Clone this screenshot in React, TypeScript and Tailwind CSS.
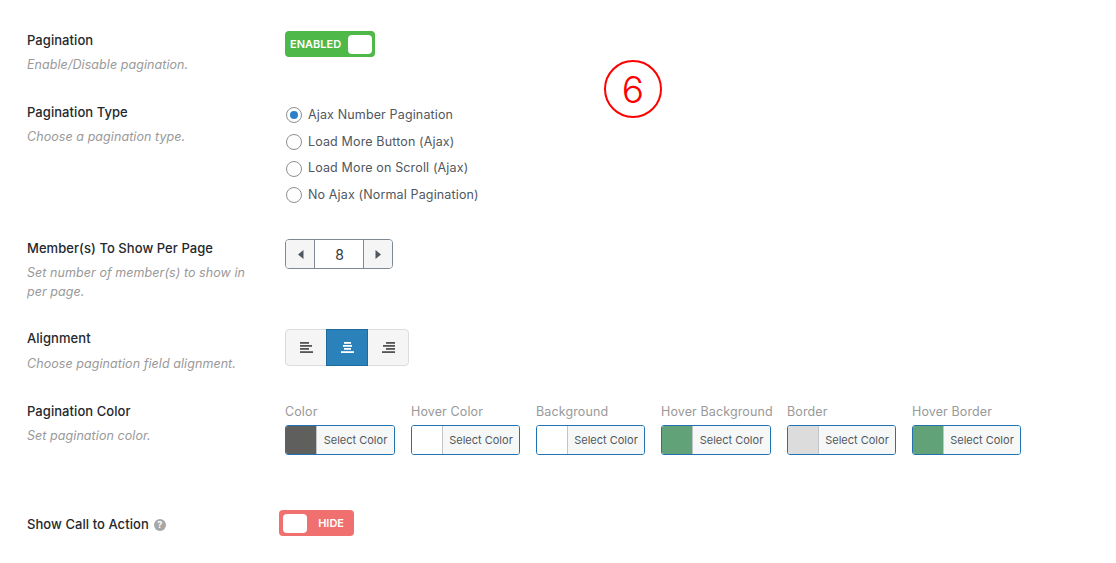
const SWATCHES = [
  { label: 'Color', color: 'bg-[#5f5f5d]', width: 'w-[110px]' },
  { label: 'Hover Color', color: 'bg-white', width: 'w-[109px]' },
  { label: 'Background', color: 'bg-white', width: 'w-[109px]' },
  { label: 'Hover Background', color: 'bg-[#61a279]', width: 'w-[110px]' },
  { label: 'Border', color: 'bg-[#dcdcdc]', width: 'w-[109px]' },
  { label: 'Hover Border', color: 'bg-[#61a279]', width: 'w-[109px]' },
]

const RADIOS = ['Ajax Number Pagination', 'Load More Button (Ajax)', 'Load More on Scroll (Ajax)', 'No Ajax (Normal Pagination)']

function Label({ title, desc, descGap = 'mt-[6px]' }: { title: string; desc?: string; descGap?: string }) {
  return (
    <div className="w-[258px] shrink-0 pr-[20px]">
      <div className="text-[13px] leading-[18px] font-medium tracking-[0.06px] text-[#23282d]">{title}</div>
      {desc && <p className={`${descGap} text-[12.5px] leading-[19px] italic tracking-[0.07px] text-[#999]`}>{desc}</p>}
    </div>
  )
}

function AlignIcon({ side, color }: { side: 'left' | 'center' | 'right'; color: string }) {
  const x = (w: number) => (side === 'left' ? 0 : side === 'right' ? 13 - w : (13 - w) / 2)
  const top = side === 'center' ? 7 : 9
  return (
    <svg width="13" height="11" viewBox="0 0 13 11" fill={color}>
      <rect x={x(top)} y="0" width={top} height="1.8" />
      <rect x={x(side === 'center' ? 9 : 12)} y="3" width={side === 'center' ? 9 : 12} height="1.8" />
      <rect x={x(side === 'center' ? 7 : 9)} y="6" width={side === 'center' ? 7 : 9} height="1.8" />
      <rect x={x(13)} y="9.2" width="13" height="1.8" />
    </svg>
  )
}

export default function App() {
  return (
    <div className="relative h-[563px] w-[1116px] overflow-hidden bg-white pl-[27px] pt-[31px] font-['Inter','Liberation_Sans',sans-serif]">
      {/* Section marker */}
      <div className="absolute left-[604px] top-[60px] flex h-[58px] w-[58px] items-center justify-center rounded-full border-2 border-[#ff0000] text-[37px] font-light leading-none text-[#ff0000]">
        6
      </div>

      <div className="flex h-[72px]">
        <Label title="Pagination" desc="Enable/Disable pagination." />
        <div className="flex h-[26px] w-[90px] items-center justify-between rounded-[4px] bg-[#4eb848] pl-[5px] pr-[3px]">
          <span className="pt-px text-[11px] font-semibold text-white">ENABLED</span>
          <span className="h-[19px] w-[24px] rounded-[4px] bg-white" />
        </div>
      </div>

      <div className="flex h-[136px]">
        <Label title="Pagination Type" desc="Choose a pagination type." />
        <div className="-mt-px flex flex-col">
          {RADIOS.map((r, i) => (
            <div key={r} className="flex h-[26.7px] items-center gap-[6px] pl-px text-[12.5px] tracking-[0.14px] text-[#50575e]">
              <span className="flex h-[16px] w-[16px] items-center justify-center rounded-full border border-[#8c8f94]">
                {i === 0 && <span className="h-[8px] w-[8px] rounded-full bg-[#2b7fc7]" />}
              </span>
              {r}
            </div>
          ))}
        </div>
      </div>

      <div className="flex h-[90px]">
        <Label title="Member(s) To Show Per Page" desc="Set number of member(s) to show in per page." />
        <div className="flex h-[30px] w-[108px] overflow-hidden rounded-[4px] border border-[#7e8993] text-[#32373c]">
          <span className="flex w-[29px] items-center justify-center border-r border-[#7e8993] bg-[#f5f5f5] pl-px">
            <svg width="6" height="9" viewBox="0 0 6 9" fill="#50575e"><path d="M5.5 0v9L0 4.5z" /></svg>
          </span>
          <span className="flex flex-1 items-center justify-center pl-px text-[14px]">8</span>
          <span className="flex w-[29px] items-center justify-center border-l border-[#7e8993] bg-[#f5f5f5]">
            <svg width="6" height="9" viewBox="0 0 6 9" fill="#50575e"><path d="M.5 0v9L6 4.5z" /></svg>
          </span>
        </div>
      </div>

      <div className="flex h-[73px]">
        <Label title="Alignment" desc="Choose pagination field alignment." descGap="mt-[7px]" />
        <div className="flex h-[37px] w-[124px] rounded-[4px] border border-[#dcdcde] bg-[#f5f5f5]">
          <span className="flex w-[40px] items-center justify-center">
            <AlignIcon side="left" color="#555" />
          </span>
          <span className="-my-px flex w-[42px] items-center justify-center border border-[#1f6a9c] bg-[#2b82ba]">
            <AlignIcon side="center" color="#fff" />
          </span>
          <span className="flex flex-1 items-center justify-center">
            <AlignIcon side="right" color="#555" />
          </span>
        </div>
      </div>

      <div className="flex h-[108px]">
        <Label title="Pagination Color" desc="Set pagination color." />
        <div className="flex gap-[16px]">
          {SWATCHES.map(s => (
            <div key={s.label} className={s.width}>
              <div className="mt-px whitespace-nowrap text-[12.5px] leading-[18px] tracking-[0.12px] text-[#999]">{s.label}</div>
              <div className="mt-[4px] flex h-[30px] overflow-hidden rounded-[3px] border border-[#2271b1]">
                <span className={`w-[31px] border-r border-[#c3c4c7] ${s.color}`} />
                <span className="flex flex-1 items-center justify-center bg-[#f6f7f7] text-[11px] text-[#50575e]">Select Color</span>
              </div>
            </div>
          ))}
        </div>
      </div>

      <div className="flex h-[26px] items-center">
        <div className="flex w-[252px] shrink-0 items-center gap-[5px] pt-[3px] text-[13px] font-medium tracking-[0.06px] text-[#23282d]">
          Show Call to Action
          <span className="flex h-[12px] w-[12px] items-center justify-center rounded-full bg-[#a7a7a7] text-[9px] font-bold text-white">?</span>
        </div>
        <div className="flex h-[26px] w-[75px] items-center justify-between rounded-[4px] bg-[#f07070] pl-[4px] pr-[10px]">
          <span className="h-[19px] w-[24px] rounded-[4px] bg-white" />
          <span className="pt-px text-[11px] font-semibold text-white">HIDE</span>
        </div>
      </div>
    </div>
  )
}
